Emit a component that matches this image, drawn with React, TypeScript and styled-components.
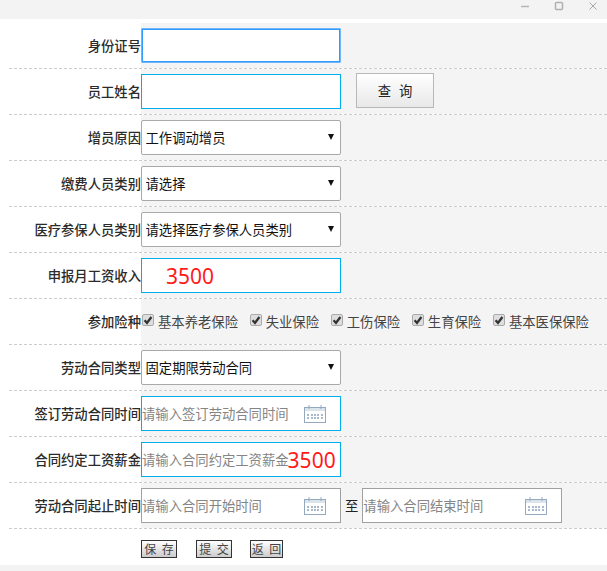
import styled, { createGlobalStyle } from "styled-components";

const FONT = `"Noto Sans CJK SC", "Noto Sans", sans-serif`;

const INSURANCES = ["基本养老保险", "失业保险", "工伤保险", "生育保险", "基本医保保险"];

const CalendarIcon = () => (
  <CalendarSvg viewBox="0 0 22 18" width="22" height="18">
    <rect x="0.5" y="2.5" width="21" height="15" fill="#fff" stroke="#94a9be" />
    <rect x="1" y="3" width="20" height="3" fill="#dbe3eb" />
    <path d="M5 0v4M17 0v4" stroke="#94a9be" />
    <path
      d="M3 9h2v2H3zM7 9h2v2H7zM10 9h2v2h-2zM13 9h2v2h-2zM17 9h2v2h-2zM3 12h2v2H3zM7 12h2v2H7zM10 12h2v2h-2zM13 12h2v2h-2zM17 12h2v2h-2z"
      fill="#a9b9c9"
    />
  </CalendarSvg>
);

const Check = () => (
  <svg viewBox="0 0 12 12" width="12" height="12">
    <path d="M2.6 6.2 5 9l4.4-6" fill="none" stroke="#333" strokeWidth="2.3" />
  </svg>
);

const Select = ({ value }: { value: string }) => (
  <SelectWrap>
    <SelectBox defaultValue={value}>
      <option>{value}</option>
    </SelectBox>
  </SelectWrap>
);

const DateField = ({ placeholder, $blue }: { placeholder: string; $blue?: boolean }) => (
  <DateBox $blue={$blue}>
    <DateInput placeholder={placeholder} />
    <CalendarIcon />
  </DateBox>
);

export default function App() {
  return (
    <Page>
      <GlobalStyle />
      <TitleBar>
        <svg viewBox="0 0 10 10" width="10" height="10">
          <path d="M1 5.5h8" stroke="#b5b5b5" strokeWidth="1.5" />
        </svg>
        <svg viewBox="0 0 10 10" width="10" height="10">
          <rect x="1.5" y="1.5" width="7" height="7" rx="1" fill="none" stroke="#b0b0b0" strokeWidth="1.5" />
        </svg>
        <svg viewBox="0 0 10 10" width="10" height="10">
          <path d="M1.5 1.5l7 7M8.5 1.5l-7 7" stroke="#a8a8a8" strokeWidth="1" />
        </svg>
      </TitleBar>
      <Form>
        <Row>
          <Label>身份证号</Label>
          <Field>
            <TextInput $focus />
          </Field>
        </Row>
        <Row>
          <Label>员工姓名</Label>
          <Field>
            <TextInput />
            <QueryButton type="button">查&nbsp;&nbsp;询</QueryButton>
          </Field>
        </Row>
        <Row>
          <Label>增员原因</Label>
          <Field>
            <Select value="工作调动增员" />
          </Field>
        </Row>
        <Row>
          <Label>缴费人员类别</Label>
          <Field>
            <Select value="请选择" />
          </Field>
        </Row>
        <Row>
          <Label>医疗参保人员类别</Label>
          <Field>
            <Select value="请选择医疗参保人员类别" />
          </Field>
        </Row>
        <Row>
          <Label>申报月工资收入</Label>
          <Field>
            <AmountInput defaultValue="3500" />
          </Field>
        </Row>
        <Row>
          <Label>参加险种</Label>
          <CheckField>
            {INSURANCES.map((name) => (
              <CheckItem key={name}>
                <CheckMark>
                  <Check />
                </CheckMark>
                {name}
              </CheckItem>
            ))}
          </CheckField>
        </Row>
        <Row>
          <Label>劳动合同类型</Label>
          <Field>
            <Select value="固定期限劳动合同" />
          </Field>
        </Row>
        <Row>
          <Label>签订劳动合同时间</Label>
          <Field>
            <DateField placeholder="请输入签订劳动合同时间" $blue />
          </Field>
        </Row>
        <Row>
          <Label>合同约定工资薪金</Label>
          <Field>
            <SalaryBox>
              <Hint>请输入合同约定工资薪金</Hint>
              <SalaryValue>3500</SalaryValue>
            </SalaryBox>
          </Field>
        </Row>
        <Row>
          <Label>劳动合同起止时间</Label>
          <Field>
            <DateField placeholder="请输入合同开始时间" />
            <To>至</To>
            <DateField placeholder="请输入合同结束时间" />
          </Field>
        </Row>
      </Form>
      <Footer>
        <SmallButton type="button">保 存</SmallButton>
        <SmallButton type="button">提 交</SmallButton>
        <SmallButton type="button">返 回</SmallButton>
      </Footer>
    </Page>
  );
}

const GlobalStyle = createGlobalStyle`
  html, body {
    margin: 0;
    padding: 0;
    background: #f3f3f3;
  }
  body {
    font-family: ${FONT};
    font-size: 13.33px;
    color: #333;
  }
`;

const Page = styled.div`
  width: 607px;
  height: 571px;
  overflow: hidden;
  background: #f3f3f3;
`;

const TitleBar = styled.div`
  height: 19px;
  display: flex;
  align-items: center;
  justify-content: flex-end;
  gap: 24px;
  padding: 0 9px 7px 0;
  box-sizing: border-box;
`;

const Form = styled.div`
  background: #fff;
  padding: 4px 0 0 9px;
`;

const Row = styled.div`
  display: flex;
  height: 46px;
  box-sizing: border-box;
  border-bottom: 1px dashed #ccc;
`;

const Label = styled.div`
  width: 132px;
  flex: none;
  display: flex;
  align-items: center;
  justify-content: flex-end;
  font-weight: 500;
  color: #2b2b2b;
  white-space: nowrap;
`;

const Field = styled.div`
  flex: 1;
  display: flex;
  align-items: center;
  background: #f4f4f4;
`;

const CheckField = styled(Field)`
  gap: 11.75px;
  padding-left: 1px;
  color: #444;
`;

const CheckItem = styled.label`
  display: flex;
  align-items: center;
  gap: 4px;
  white-space: nowrap;
`;

const CheckMark = styled.span`
  width: 12px;
  height: 12px;
  margin-bottom: 4px;
  box-sizing: border-box;
  display: flex;
  align-items: center;
  justify-content: center;
  border: 1px solid #aaa;
  border-radius: 2px;
  background: #dedede;
  svg {
    flex: none;
  }
`;

const TextInput = styled.input<{ $focus?: boolean }>`
  width: 200px;
  height: 35px;
  box-sizing: border-box;
  padding: 0 1px;
  background: #fff;
  border: 1px solid ${({ $focus }) => ($focus ? "#6fb6ff" : "#00aeef")};
  box-shadow: ${({ $focus }) => ($focus ? "inset 0 0 0 1px #2f9bff" : "none")};
  border-radius: ${({ $focus }) => ($focus ? "1px" : "0")};
  outline: none;
  font: inherit;
`;

const AmountInput = styled(TextInput)`
  padding-left: 24px;
  color: #ff1a1a;
  font-family: "Noto Sans", sans-serif;
  font-size: 21px;
`;

const QueryButton = styled.button`
  width: 78px;
  height: 35px;
  margin: 0 0 2px 15px;
  padding: 0;
  border: 1px solid #b8b8b8;
  background: linear-gradient(#fff, #e8e8e8);
  color: #222;
  font: inherit;
  word-spacing: 1px;
`;

const SelectWrap = styled.div`
  position: relative;
  width: 200px;
  height: 35px;
  &::after {
    content: "";
    position: absolute;
    right: 7px;
    top: 14px;
    border-left: 3px solid transparent;
    border-right: 3px solid transparent;
    border-top: 6px solid #111;
  }
`;

const SelectBox = styled.select`
  appearance: none;
  width: 100%;
  height: 100%;
  box-sizing: border-box;
  padding: 0 0 0 3.5px;
  background: #fff;
  border: 1px solid #a9a9a9;
  border-radius: 2px;
  color: #111;
  outline: none;
  font: inherit;
`;

const DateBox = styled.div<{ $blue?: boolean }>`
  width: 200px;
  height: 35px;
  flex: none;
  box-sizing: border-box;
  display: flex;
  align-items: center;
  padding: 0 14px 0 0;
  background: #fff;
  border: 1px solid ${({ $blue }) => ($blue ? "#00aeef" : "#a0a0a0")};
`;

const DateInput = styled.input`
  flex: 1;
  min-width: 0;
  border: 0;
  padding: 0;
  outline: none;
  background: transparent;
  font: inherit;
  &::placeholder {
    color: #858585;
  }
`;

const CalendarSvg = styled.svg`
  flex: none;
`;

const To = styled.span`
  margin: 0 4px;
  color: #222;
`;

const SalaryBox = styled.div`
  width: 200px;
  height: 35px;
  box-sizing: border-box;
  display: flex;
  align-items: center;
  background: #fff;
  border: 1px solid #00aeef;
`;

const Hint = styled.span`
  color: #858585;
  white-space: nowrap;
`;

const SalaryValue = styled.span`
  margin-left: -1px;
  color: #ff1a1a;
  font-family: "Noto Sans", sans-serif;
  font-size: 21px;
`;

const Footer = styled.div`
  height: 36px;
  box-sizing: border-box;
  display: flex;
  align-items: flex-start;
  gap: 19px;
  padding: 11px 0 0 141px;
  background: #fff;
`;

const SmallButton = styled.button`
  width: 36px;
  height: 18px;
  padding: 0;
  border: 1px solid #333;
  background: linear-gradient(#fff, #ccc);
  color: #444;
  font: inherit;
  font-size: 12px;
  word-spacing: 3px;
  line-height: 14px;
  & + & + & {
    width: 33px;
    margin-left: -1px;
  }
`;
